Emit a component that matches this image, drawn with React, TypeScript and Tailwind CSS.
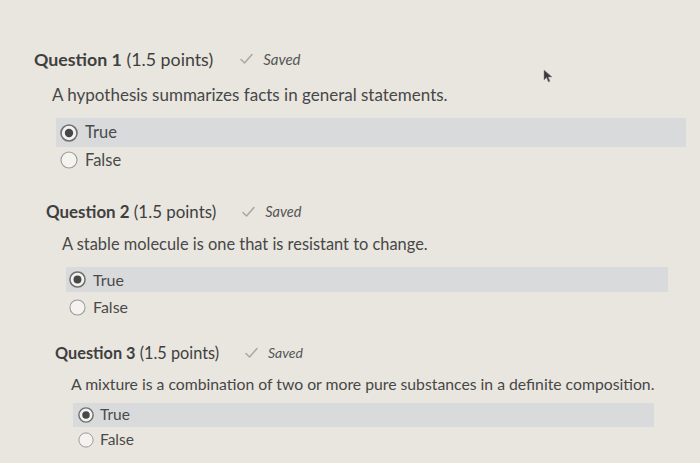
import React from 'react';

type Q = {
  n: number;
  text: string;
  ml: string;
  head: string;
  headMt: string;
  body: string;
  bodyMl: string;
  opts: string;
  bar: string;
  falseRow: string;
  radio: number;
  label: string;
  saved: string;
  checkGap: string;
};

const questions: Q[] = [
  {
    n: 1,
    text: 'A hypothesis summarizes facts in general statements.',
    ml: 'ml-[34px]',
    head: 'text-[17.8px] leading-[24px]',
    headMt: 'mt-[47px]',
    body: 'text-[17px] leading-[24px] mt-[12px]',
    bodyMl: 'ml-[18px]',
    opts: 'mt-[11px] ml-[22px] w-[630px]',
    bar: 'h-[29px] pl-[4px]',
    falseRow: 'h-[26px] pl-[4px]',
    radio: 18,
    label: 'ml-[7px] text-[16.5px]',
    saved: 'text-[15px]',
    checkGap: 'ml-[26px]',
  },
  {
    n: 2,
    text: 'A stable molecule is one that is resistant to change.',
    ml: 'ml-[46px]',
    head: 'text-[16.9px] leading-[22px]',
    headMt: 'mt-[28px]',
    body: 'text-[16.4px] leading-[22px] mt-[10px]',
    bodyMl: 'ml-[16px]',
    opts: 'mt-[12px] ml-[20px] w-[602px]',
    bar: 'h-[25px] pl-[3px]',
    falseRow: 'h-[30px] pl-[3px]',
    radio: 17,
    label: 'ml-[7px] text-[16px]',
    saved: 'text-[14.5px]',
    checkGap: 'ml-[25px]',
  },
  {
    n: 3,
    text: 'A mixture is a combination of two or more pure substances in a definite composition.',
    ml: 'ml-[55px]',
    head: 'text-[16.3px] leading-[22px]',
    headMt: 'mt-[20px]',
    body: 'text-[15.75px] leading-[22px] mt-[9px]',
    bodyMl: 'ml-[16px]',
    opts: 'mt-[8px] ml-[18px] w-[581px]',
    bar: 'h-[24px] pl-[5px]',
    falseRow: 'h-[26px] pl-[5px]',
    radio: 16,
    label: 'ml-[6px] text-[15.5px]',
    saved: 'text-[14px]',
    checkGap: 'ml-[25px]',
  },
];

function Radio({ size, checked }: { size: number; checked: boolean }) {
  return (
    <svg width={size} height={size} viewBox="0 0 18 18" className="shrink-0">
      <circle cx="9" cy="9" r="8" fill="#f4f3f0" stroke={checked ? '#6f6f6f' : '#9a9a9a'} strokeWidth={checked ? 1.6 : 1.1} />
      {checked && <circle cx="9" cy="9" r="4.2" fill="#474747" />}
    </svg>
  );
}

function Check() {
  return (
    <svg width="15" height="12" viewBox="0 0 14 12" className="shrink-0">
      <path d="M1.5 6.5 L5 10 L12.5 1.5" fill="none" stroke="#a9a9a6" strokeWidth="1.6" strokeLinecap="round" strokeLinejoin="round" />
    </svg>
  );
}

export default function App() {
  return (
    <div
      className="relative w-[700px] h-[463px] overflow-hidden bg-[#e9e6df] text-[#444444]"
      style={{ fontFamily: 'Lato, "Open Sans", sans-serif' }}
    >
      <div className="flex flex-col">
        {questions.map((q) => (
          <div key={q.n} className={`flex flex-col ${q.ml} ${q.headMt}`}>
            <div className={`flex items-center ${q.head}`}>
              <span className="text-[#3f3f3f]">
                <span className="font-bold">Question {q.n}</span> (1.5 points)
              </span>
              <span className={q.checkGap}>
                <Check />
              </span>
              <span className={`ml-[9px] italic text-[#555555] ${q.saved}`}>Saved</span>
            </div>
            <p className={`${q.bodyMl} ${q.body} text-[#474747]`}>{q.text}</p>
            <div className={`flex flex-col ${q.opts}`}>
              <div className={`flex items-center bg-[#d8dadb] ${q.bar}`}>
                <Radio size={q.radio} checked />
                <span className={`${q.label} text-[#4a4a4a]`}>True</span>
              </div>
              <div className={`flex items-center ${q.falseRow}`}>
                <Radio size={q.radio} checked={false} />
                <span className={`${q.label} text-[#4a4a4a]`}>False</span>
              </div>
            </div>
          </div>
        ))}
      </div>
      {/* mouse pointer */}
      <svg className="absolute left-[543px] top-[69px]" width="11" height="14" viewBox="0 0 11 14">
        <path d="M1 1 L1 11 L3.5 8.5 L5.5 13 L7 12.3 L5.2 8 L9 8 Z" fill="#3a3a3a" stroke="#8a8a8a" strokeWidth="0.5" />
      </svg>
    </div>
  );
}
